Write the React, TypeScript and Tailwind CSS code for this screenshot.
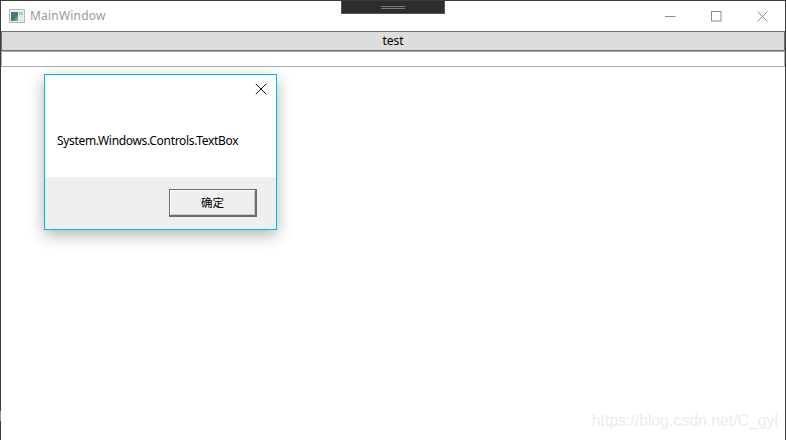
export default function App() {
  return (
    <div className="relative h-[440px] w-[786px] overflow-hidden">
      <div className="relative h-[440px] w-[786px] overflow-hidden border-x border-t border-[#3c3c3c] bg-white font-['Noto_Sans','Noto_Sans_CJK_SC',sans-serif] text-[12px] text-black">
        <div className="absolute left-[340px] top-0 flex h-[13px] w-[104px] items-center justify-center border border-t-0 border-[#555555] bg-[#2d2d2d]">
          <div className="h-[3px] w-6 border-y border-[#7a7a7a]" />
        </div>
        <header className="flex h-[30px] items-center justify-between pl-2">
          <div className="flex items-center gap-[5px]">
            <svg width="16" height="14" viewBox="0 0 16 14" className="shrink-0">
              <defs>
                <linearGradient id="pane" x1="0" y1="0" x2="1" y2="1">
                  <stop offset="0" stopColor="#5a6f8f" />
                  <stop offset="0.55" stopColor="#3f7f78" />
                  <stop offset="1" stopColor="#8cc4a0" />
                </linearGradient>
              </defs>
              <rect x="0.5" y="0.5" width="15" height="13" fill="#ededed" stroke="#b9b9b9" />
              <rect x="2" y="3" width="7" height="9" fill="url(#pane)" />
              <rect x="10" y="3" width="4" height="3" fill="#a6d0b8" />
              <rect x="10" y="7" width="4" height="5" fill="#e6e6e6" />
            </svg>
            <span className="tracking-[0.2px] text-[#9a9a9a]">MainWindow</span>
          </div>
          <div className="flex h-full items-center">
            <div className="flex h-full w-[45px] items-center justify-center">
              <svg width="11" height="11" viewBox="0 0 11 11"><path d="M0 5.5H10.5" stroke="#8c8c8c" fill="none" /></svg>
            </div>
            <div className="flex h-full w-[46px] items-center justify-center">
              <svg width="11" height="11" viewBox="0 0 11 11"><rect x="0.5" y="0.5" width="9.5" height="9.5" stroke="#8c8c8c" fill="none" /></svg>
            </div>
            <div className="flex h-full w-[46px] items-center justify-center">
              <svg width="11" height="11" viewBox="0 0 11 11"><path d="M0.5 0.5L10.5 10.5M10.5 0.5L0.5 10.5" stroke="#8c8c8c" fill="none" /></svg>
            </div>
          </div>
        </header>
        <button className="flex h-[20px] w-full items-center justify-center border border-[#707070] bg-[#dddddd] leading-none">test</button>
        <div className="h-[16px] w-full border border-[#abadb3] bg-white" />
        <div className="absolute left-[43px] top-[73px] flex h-[156px] w-[233px] flex-col border border-[#00bfcf] bg-white shadow-[0_5px_15px_rgba(0,0,0,0.3)]">
          <div className="flex h-[102px] flex-col bg-white">
            <div className="flex justify-end pr-[9px] pt-[8px]">
              <svg width="12" height="12" viewBox="0 0 12 12"><path d="M0.8 0.8L11.2 11.2M11.2 0.8L0.8 11.2" stroke="#111111" fill="none" /></svg>
            </div>
            <p className="ml-3 mt-[38px] leading-4 tracking-[-0.32px]">System.Windows.Controls.TextBox</p>
          </div>
          <div className="flex flex-1 items-start justify-end bg-[#efefef] pr-[19px] pt-3">
            <button className="flex h-[28px] w-[88px] items-center justify-center border border-b-2 border-r-2 border-[#6d6d6d] bg-[#efefef] text-[11.5px] leading-none shadow-[inset_1px_1px_0_#ffffff,inset_-1px_-1px_0_#c8c8c8]">确定</button>
          </div>
        </div>
        <div className="absolute bottom-[9px] right-[7px] font-['Liberation_Sans',sans-serif] text-[15.8px] leading-5 text-[#ececec]">https://blog.csdn.net/C_gyl</div>
      </div>
      <div className="absolute left-0 top-[411px] h-[10px] w-px bg-[#7f9aa0]" />
    </div>
  );
}
